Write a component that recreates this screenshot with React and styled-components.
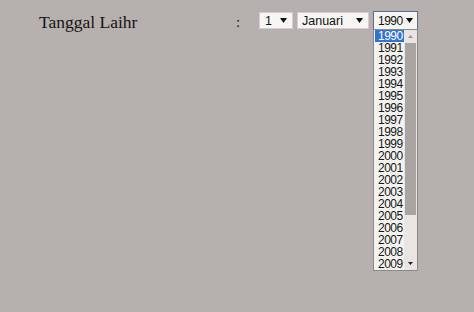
import React from "react";
import styled, { createGlobalStyle } from "styled-components";

const Global = createGlobalStyle`
  html, body { margin: 0; padding: 0; background: #b6b1ae; }
  body { width: 474px; height: 312px; overflow: hidden; }
`;

const Page = styled.div`
  padding: 12px 0 0 39px;
  display: flex;
  align-items: flex-start;
`;

const Label = styled.div`
  width: 197px;
  font-family: "Liberation Serif", "Times New Roman", serif;
  font-size: 17.5px;
  line-height: 18px;
  color: #161414;
  padding-top: 1px;
`;

const Colon = styled.div`
  width: 23px;
  font-family: "Liberation Serif", serif;
  font-size: 15px;
  line-height: 18px;
  color: #222;
  padding-top: 1px;
`;

const Selects = styled.div`
  display: flex;
  gap: 4px;
  align-items: flex-start;
`;

const Select = styled.div`
  position: relative;
  box-sizing: border-box;
  width: ${(p) => p.$w}px;
  height: ${(p) => (p.$focus ? 19 : 17)}px;
  margin-top: ${(p) => (p.$focus ? -1 : 0)}px;
  background: #f7f6f5;
  border: 1px solid ${(p) => (p.$focus ? "#5a6f96" : "#d2cfcd")};
  display: flex;
  align-items: center;
  justify-content: space-between;
  padding: 0 ${(p) => (p.$focus ? 4 : 5)}px 0 ${(p) => p.$pl}px;
  font-family: "Liberation Sans", Arial, sans-serif;
  font-size: ${(p) => (p.$focus ? 12 : 12.5)}px;
  letter-spacing: ${(p) => (p.$focus ? "-0.5px" : "0")};
  color: #111;
`;

const Arrow = styled.svg`
  width: 7px;
  height: 5px;
  flex: none;
`;

const List = styled.div`
  position: absolute;
  left: -1px;
  top: 17px;
  width: 45px;
  box-sizing: border-box;
  border: 1px solid #8c8a89;
  background: #f4f3f2;
  display: flex;
  z-index: 2;
  letter-spacing: -0.5px;
`;

const Options = styled.div`
  flex: 1;
  display: flex;
  flex-direction: column;
  padding-left: 1px;
`;

const Option = styled.div`
  height: 12px;
  line-height: 12px;
  font-family: "Liberation Sans", Arial, sans-serif;
  font-size: 12px;
  padding-left: 3px;
  color: ${(p) => (p.$sel ? "#fff" : "#151515")};
  background: ${(p) => (p.$sel ? "#3273cf" : "transparent")};
`;

const Scroll = styled.div`
  width: 13px;
  display: flex;
  flex-direction: column;
  background: #e8e5e3;
`;

const ScrollBtn = styled.div`
  height: 13px;
  display: flex;
  align-items: center;
  justify-content: center;
`;

const Thumb = styled.div`
  height: 172px;
  margin: 0 1px;
  background: #a9a4a1;
`;

const Track = styled.div`
  flex: 1;
`;

const Tri = () => (
  <Arrow viewBox="0 0 7 5">
    <polygon points="0,0 7,0 3.5,5" fill="#111" />
  </Arrow>
);

const SmallTri = styled.svg`
  width: 5px;
  height: 3px;
`;

const years = Array.from({ length: 20 }, (_, i) => 1990 + i);

export default function App() {
  return (
    <>
      <Global />
      <Page>
        <Label>Tanggal Laihr</Label>
        <Colon>:</Colon>
        <Selects>
          <Select $w={34} $pl={5}>
            <span>1</span>
            <Tri />
          </Select>
          <Select $w={72} $pl={4}>
            <span>Januari</span>
            <Tri />
          </Select>
          <Select $w={45} $pl={4} $focus>
            <span>1990</span>
            <Tri />
            <List>
              <Options>
                {years.map((y) => (
                  <Option key={y} $sel={y === 1990}>
                    {y}
                  </Option>
                ))}
              </Options>
              <Scroll>
                <ScrollBtn>
                  <SmallTri viewBox="0 0 5 3">
                    <polygon points="0,3 5,3 2.5,0" fill="#9a9693" />
                  </SmallTri>
                </ScrollBtn>
                <Thumb />
                <Track />
                <ScrollBtn>
                  <SmallTri viewBox="0 0 5 3">
                    <polygon points="0,0 5,0 2.5,3" fill="#222" />
                  </SmallTri>
                </ScrollBtn>
              </Scroll>
            </List>
          </Select>
        </Selects>
      </Page>
    </>
  );
}
